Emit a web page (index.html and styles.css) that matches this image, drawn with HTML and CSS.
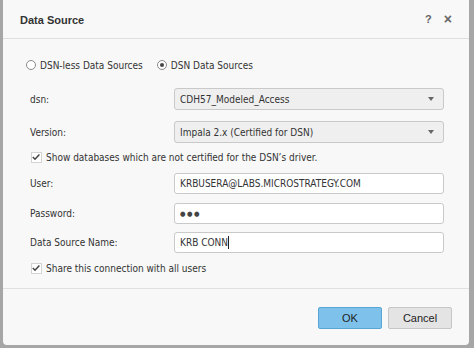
FILE: index.html
```html
<!DOCTYPE html>
<html>
<head>
    <title>Data Source</title>
    <link rel="stylesheet" href="styles.css">
</head>
<body>
    <div class="dialog">
        <div class="dialog-header">
            <span class="dialog-title">Data Source</span>
            <span class="header-btn">?</span>
            <span class="header-btn close">&#215;</span>
        </div>

        <div class="dialog-body">
            <div class="radio-row">
                <label class="radio"><span class="radio-dot"></span>DSN-less Data Sources</label>
                <label class="radio checked"><span class="radio-dot"></span>DSN Data Sources</label>
            </div>

            <div class="field-row row-dsn">
                <span class="field-label">dsn:</span>
                <div class="select">CDH57_Modeled_Access<span class="arrow"></span></div>
            </div>

            <div class="field-row row-version">
                <span class="field-label">Version:</span>
                <div class="select">Impala 2.x (Certified for DSN)<span class="arrow"></span></div>
            </div>

            <label class="check-row row-show">
                <span class="check">
                    <svg width="10" height="10" viewBox="0 0 10 10"><path d="M1.8 5 L4 7.2 L8.4 2.4" fill="none" stroke="#444" stroke-width="1.5"/></svg>
                </span>
                Show databases which are not certified for the DSN&#8217;s driver.
            </label>

            <div class="field-row row-user">
                <span class="field-label">User:</span>
                <div class="input">KRBUSERA@LABS.MICROSTRATEGY.COM</div>
            </div>

            <div class="field-row row-pass">
                <span class="field-label">Password:</span>
                <div class="input password">&#9679;&#9679;&#9679;</div>
            </div>

            <div class="field-row row-name">
                <span class="field-label">Data Source Name:</span>
                <div class="input">KRB CONN<span class="caret"></span></div>
            </div>

            <label class="check-row row-share">
                <span class="check">
                    <svg width="10" height="10" viewBox="0 0 10 10"><path d="M1.8 5 L4 7.2 L8.4 2.4" fill="none" stroke="#444" stroke-width="1.5"/></svg>
                </span>
                Share this connection with all users
            </label>
        </div>

        <div class="dialog-footer">
            <button class="btn btn-ok">OK</button>
            <button class="btn btn-cancel">Cancel</button>
        </div>
    </div>
</body>
</html>
```

FILE: styles.css
```css
body {
    margin: 0;
    background: #a6a6a6;
    font-family: 'DejaVu Sans Condensed', 'DejaVu Sans', sans-serif;
    color: #333;
}
.dialog {
    background: #f8f8f8;
    margin: 0 5px 0 3px;
    height: 345px;
    border-radius: 0 0 4px 4px;
    display: flex;
    flex-direction: column;
}
.dialog-header {
    height: 38px;
    display: flex;
    align-items: center;
    padding: 0 17px 0 17px;
    border-bottom: 1px solid #dedede;
}
.dialog-title {
    font-family: 'Liberation Sans', Arial, sans-serif;
    font-size: 11px;
    font-weight: bold;
    flex: 1;
    padding-top: 2px;
}
.header-btn {
    font-family: 'Liberation Sans', Arial, sans-serif;
    font-size: 11px;
    font-weight: bold;
    color: #666;
    margin-left: 12px;
}
.header-btn.close {
    font-size: 14px;
}
.dialog-body {
    flex: 1;
    padding: 18px 0 0 27px;
    font-size: 10px;
}
.radio-row {
    display: flex;
    align-items: center;
    height: 16px;
    margin-left: -4px;
}
.radio {
    display: flex;
    align-items: center;
    margin-right: 14px;
}
.radio-dot {
    width: 8px;
    height: 8px;
    border: 1px solid #8a8a8a;
    border-radius: 50%;
    background: #fff;
    margin-right: 4px;
    position: relative;
}
.radio.checked .radio-dot::after {
    content: '';
    position: absolute;
    left: 2px;
    top: 2px;
    width: 4px;
    height: 4px;
    border-radius: 50%;
    background: #444;
}
.field-row {
    display: flex;
    align-items: center;
}
.field-label {
    width: 144px;
}
.select, .input {
    width: 258px;
    border: 1px solid #c9c9c9;
    border-radius: 3px;
    padding: 0 5px;
    display: flex;
    align-items: center;
    position: relative;
    box-sizing: content-box;
}
.select {
    height: 20px;
    background: #efefef;
}
.input {
    height: 19px;
    background: #fff;
}
.arrow {
    position: absolute;
    right: 9px;
    top: 8px;
    border-left: 3px solid transparent;
    border-right: 3px solid transparent;
    border-top: 4px solid #666;
}
.password {
    font-size: 7px;
    letter-spacing: 1.5px;
    color: #444;
}
.caret {
    width: 1px;
    height: 13px;
    background: #222;
}
.check-row {
    display: flex;
    align-items: center;
    height: 16px;
    padding-left: 1px;
}
.check {
    width: 9px;
    height: 9px;
    margin-right: 4px;
    display: flex;
    border: 1px solid #d4d4d4;
    background: #fff;
}
.check svg {
    margin: -1px 0 0 -1px;
}
.row-dsn { margin-top: 15px; }
.row-version { margin-top: 11px; }
.row-show { margin-top: 6px; }
.row-user { margin-top: 8px; }
.row-pass { margin-top: 9px; }
.row-name { margin-top: 8px; }
.row-share { margin-top: 7px; }
.dialog-footer {
    border-top: 1px solid #e0e0e0;
    height: 57px;
    display: flex;
    justify-content: flex-end;
    padding: 18px 17px 0 0;
    box-sizing: border-box;
    gap: 6px;
}
.btn {
    width: 64px;
    height: 22px;
    font-family: 'Liberation Sans', Arial, sans-serif;
    font-size: 11px;
    color: #222;
    border-radius: 2px;
}
.btn-ok {
    background: #7ec2ec;
    border: 1px solid #58a6d6;
}
.btn-cancel {
    background: #e4e4e4;
    border: 1px solid #c6c6c6;
}
```
